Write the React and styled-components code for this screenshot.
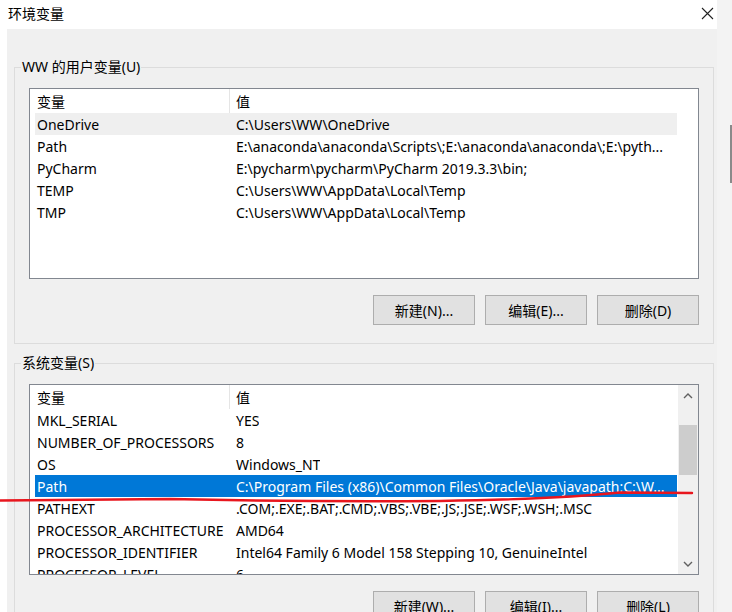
import React from 'react'
import styled, {createGlobalStyle} from 'styled-components'

const userVars = [
  {name: 'OneDrive', value: 'C:\\Users\\WW\\OneDrive', hover: true},
  {name: 'Path', value: 'E:\\anaconda\\anaconda\\Scripts\\;E:\\anaconda\\anaconda\\;E:\\pyth...'},
  {name: 'PyCharm', value: 'E:\\pycharm\\pycharm\\PyCharm 2019.3.3\\bin;'},
  {name: 'TEMP', value: 'C:\\Users\\WW\\AppData\\Local\\Temp'},
  {name: 'TMP', value: 'C:\\Users\\WW\\AppData\\Local\\Temp'},
]

const systemVars = [
  {name: 'MKL_SERIAL', value: 'YES'},
  {name: 'NUMBER_OF_PROCESSORS', value: '8'},
  {name: 'OS', value: 'Windows_NT'},
  {name: 'Path', value: 'C:\\Program Files (x86)\\Common Files\\Oracle\\Java\\javapath;C:\\W...', selected: true},
  {name: 'PATHEXT', value: '.COM;.EXE;.BAT;.CMD;.VBS;.VBE;.JS;.JSE;.WSF;.WSH;.MSC'},
  {name: 'PROCESSOR_ARCHITECTURE', value: 'AMD64'},
  {name: 'PROCESSOR_IDENTIFIER', value: 'Intel64 Family 6 Model 158 Stepping 10, GenuineIntel'},
  {name: 'PROCESSOR_LEVEL', value: '6'},
]

function VarList({rows, scroll}) {
  return (
    <List>
      <Rows>
        <Header>
          <NameCell>变量</NameCell>
          <HeaderValue>值</HeaderValue>
        </Header>
        {rows.map((r) => (
          <Row key={r.name} selected={r.selected} hover={r.hover}>
            <NameCell>{r.name}</NameCell>
            <ValueCell>{r.value}</ValueCell>
          </Row>
        ))}
      </Rows>
      <ScrollArea>
        {scroll && (
          <Track>
            <Arrow>
              <svg width="10" height="6" viewBox="0 0 10 6">
                <polyline points="1,5 5,1 9,5" fill="none" stroke="#606060" strokeWidth="1.4" />
              </svg>
            </Arrow>
            <Thumb />
            <Arrow bottom>
              <svg width="10" height="6" viewBox="0 0 10 6">
                <polyline points="1,1 5,5 9,1" fill="none" stroke="#606060" strokeWidth="1.4" />
              </svg>
            </Arrow>
          </Track>
        )}
      </ScrollArea>
    </List>
  )
}

function App() {
  return (
    <Screen>
      <GlobalStyle />
      <Window>
        <TitleBar>
          <Title>环境变量</Title>
          <svg width="13" height="13" viewBox="0 0 13 13">
            <path d="M1 1 L12 12 M12 1 L1 12" stroke="#222" strokeWidth="1.1" />
          </svg>
        </TitleBar>
        <Content>
          <Group>
            <Legend>WW 的用户变量(U)</Legend>
            <VarList rows={userVars} />
            <Buttons>
              <Button>新建(N)...</Button>
              <Button>编辑(E)...</Button>
              <Button>删除(D)</Button>
            </Buttons>
          </Group>
          <Group>
            <Legend>系统变量(S)</Legend>
            <VarList rows={systemVars} scroll />
            <Buttons>
              <Button>新建(W)...</Button>
              <Button>编辑(I)...</Button>
              <Button>删除(L)</Button>
            </Buttons>
          </Group>
        </Content>
      </Window>
      <Desktop>
        <DesktopEdge />
      </Desktop>
      <Mark width="732" height="612" viewBox="0 0 732 612">
        <path
          d="M0 500.5 L170 499 Q300 502 440 501 Q560 499 620 492.5 L692 493"
          fill="none"
          stroke="#e8161e"
          strokeWidth="2.4"
          strokeLinecap="round"
        />
      </Mark>
    </Screen>
  )
}

export default App

const GlobalStyle = createGlobalStyle`
  body {
    margin: 0;
    background: #f3f3f3;
    font-family: "Noto Sans", "Noto Sans CJK SC", sans-serif;
    color: #000;
  }
`

const Screen = styled.div`
  position: relative;
  display: flex;
  width: 732px;
  height: 612px;
  overflow: hidden;
`
const Window = styled.div`
  width: 717px;
  flex: none;
  display: flex;
  flex-direction: column;
  background: #fff;
`
const TitleBar = styled.div`
  height: 29px;
  flex: none;
  box-sizing: border-box;
  display: flex;
  align-items: center;
  justify-content: space-between;
  padding: 0 3px 3px 8px;
`
const Title = styled.div`
  font-size: 14px;
`
const Content = styled.div`
  flex: none;
  margin-left: 7px;
  background: #f0f0f0;
  padding: 38px 3px 0 7px;
  display: flex;
  flex-direction: column;
  gap: 19px;
`
const Group = styled.div`
  border: 1px solid #dcdcdc;
  padding: 0 14px 18px;
`
const Legend = styled.div`
  width: fit-content;
  margin: -11px 0 11px -8px;
  padding: 0 1px;
  line-height: 20px;
  font-size: 14px;
  background: #f0f0f0;
`
const List = styled.div`
  height: 191px;
  box-sizing: border-box;
  border: 1px solid #828790;
  background: #fff;
  display: flex;
  overflow: hidden;
`
const Rows = styled.div`
  flex: 1;
  padding-left: 5px;
  min-width: 0;
`
const ScrollArea = styled.div`
  width: 21px;
  flex: none;
  padding-left: 1px;
  box-sizing: border-box;
`
const Track = styled.div`
  height: 100%;
  background: #f0f0f0;
  display: flex;
  flex-direction: column;
`
const Arrow = styled.div`
  height: 21px;
  display: flex;
  align-items: center;
  justify-content: center;
  margin-top: ${(p) => (p.bottom ? 'auto' : '0')};
`
const Thumb = styled.div`
  height: 50px;
  margin: 19px 1px 0 1px;
  background: #cdcdcd;
`
const Header = styled.div`
  height: 24px;
  display: flex;
  align-items: center;
  font-size: 14px;
`
const HeaderValue = styled.div`
  align-self: stretch;
  display: flex;
  align-items: center;
  border-left: 1px solid #e5e5e5;
  padding-left: 6px;
`
const Row = styled.div`
  height: 22px;
  display: flex;
  align-items: center;
  font-size: 14px;
  white-space: nowrap;
  background: ${(p) => (p.selected ? '#0078d7' : p.hover ? '#efefef' : 'transparent')};
  color: ${(p) => (p.selected ? '#fff' : '#000')};
`
const NameCell = styled.div`
  width: 194px;
  flex: none;
  box-sizing: border-box;
  padding-left: 2px;
  overflow: hidden;
`
const ValueCell = styled.div`
  padding-left: 7px;
  overflow: hidden;
`
const Buttons = styled.div`
  display: flex;
  justify-content: flex-end;
  gap: 10px;
  margin-top: 16px;
`
const Button = styled.button`
  width: 102px;
  height: 30px;
  border: 1px solid #adadad;
  background: #e1e1e1;
  font-family: inherit;
  font-size: 14px;
  color: #000;
  padding: 0;
`
const Desktop = styled.div`
  flex: 1;
  display: flex;
  justify-content: flex-end;
  align-items: flex-start;
`
const DesktopEdge = styled.div`
  width: 2px;
  height: 58px;
  margin-top: 125px;
  background: #8a8a8a;
`
const Mark = styled.svg`
  position: absolute;
  left: 0;
  top: 0;
  pointer-events: none;
`
